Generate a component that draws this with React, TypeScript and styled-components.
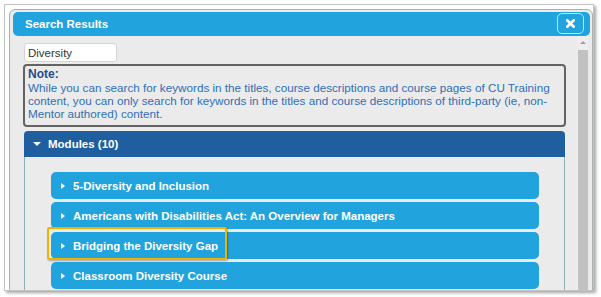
import React from "react";
import styled, { createGlobalStyle } from "styled-components";

const Global = createGlobalStyle`
  html, body { margin: 0; padding: 0; background: #ffffff; }
  body { font-family: "Liberation Sans", Arial, sans-serif; }
  * { box-sizing: border-box; }
`;

const Page = styled.div`
  width: 601px;
  height: 297px;
  padding: 4px 0 0 4px;
  background: #ffffff;
`;

const Frame = styled.div`
  width: 590px;
  height: 287px;
  border: 1px solid #c4c4c4;
  box-shadow: 2px 2px 3px rgba(0, 0, 0, 0.35);
  background: #ffffff;
  overflow: hidden;
  padding: 4px 0 0 4px;
`;

const Dialog = styled.div`
  width: 584px;
  height: 300px;
  border: 1px solid #a8b0b0;
  border-radius: 6px;
  background: #ebebeb;
  padding: 2px 2px 0 3px;
  display: flex;
  flex-direction: column;
`;

const TitleBar = styled.div`
  height: 24px;
  background: #21a4dd;
  border-radius: 5px;
  display: flex;
  align-items: flex-start;
  justify-content: space-between;
  padding: 0 6px 0 12px;
  flex-shrink: 0;
`;

const Title = styled.span`
  color: #ffffff;
  font-weight: bold;
  font-size: 11.5px;
  line-height: 24px;
`;

const CloseButton = styled.button`
  margin-top: 1px;
  width: 27px;
  height: 21px;
  border: 1px solid rgba(255, 255, 255, 0.7);
  border-radius: 5px;
  background: transparent;
  padding: 0;
  display: flex;
  align-items: center;
  justify-content: center;
`;

const Body = styled.div`
  flex: 1;
  display: flex;
  min-height: 0;
`;

const Content = styled.div`
  flex: 1;
  padding: 7px 11px 0 10px;
  display: flex;
  flex-direction: column;
`;

const SearchInput = styled.input`
  width: 93px;
  height: 19px;
  margin-left: 1px;
  border: 1px solid #d4d4d4;
  border-radius: 3px;
  background: #ffffff;
  font-family: "Liberation Sans", Arial, sans-serif;
  font-size: 11.5px;
  color: #333333;
  padding: 0 0 0 3px;
  outline: none;
`;

const Note = styled.div`
  margin-top: 2px;
  height: 63px;
  border: 2px solid #636363;
  border-radius: 4px;
  padding: 2px 3px 0;
  color: #2f6fb6;
  font-size: 11.7px;
  line-height: 13px;
  white-space: nowrap;
`;

const NoteLabel = styled.div`
  font-weight: bold;
  color: #1f4e8b;
  font-size: 12px;
`;

const ModulesHeader = styled.div`
  margin: 4px 1px 0 1px;
  height: 26px;
  background: #1f5f9f;
  border-radius: 4px 4px 0 0;
  display: flex;
  align-items: center;
  padding-left: 9px;
  gap: 7px;
  color: #ffffff;
  font-weight: bold;
  font-size: 11.5px;
  flex-shrink: 0;
`;

const DownCaret = styled.span`
  width: 0;
  height: 0;
  border-left: 4px solid transparent;
  border-right: 4px solid transparent;
  border-top: 4px solid #ffffff;
`;

const Panel = styled.div`
  margin: 0 1px;
  flex: 1;
  border-left: 1px solid #8fb2b4;
  border-right: 1px solid #8fb2b4;
  padding: 15px 25px 0 26px;
  display: flex;
  flex-direction: column;
  gap: 3px;
`;

const Item = styled.div`
  position: relative;
  height: 27px;
  background: #21a4dd;
  border-radius: 5px;
  display: flex;
  align-items: center;
  padding-left: 10px;
  gap: 8px;
  color: #ffffff;
  font-weight: bold;
  font-size: 11.5px;
  flex-shrink: 0;
`;

const RightCaret = styled.span`
  width: 0;
  height: 0;
  border-top: 3.5px solid transparent;
  border-bottom: 3.5px solid transparent;
  border-left: 4px solid #ffffff;
`;

const Highlight = styled.span`
  position: absolute;
  left: -4px;
  top: -5px;
  width: 180px;
  height: 33px;
  border: 2px solid #f2b200;
  border-radius: 2px;
  box-shadow: 1px 1px 2px rgba(0, 0, 0, 0.3);
  pointer-events: none;
`;

const Scrollbar = styled.div`
  width: 11px;
  margin-right: 2px;
  background: #eeeeee;
  display: flex;
  flex-direction: column;
  align-items: center;
  padding-top: 5px;
`;

const UpArrow = styled.span`
  width: 0;
  height: 0;
  border-left: 3px solid transparent;
  border-right: 3px solid transparent;
  border-bottom: 3px solid #a0a0a0;
`;

const Thumb = styled.div`
  margin-top: 6px;
  width: 10px;
  flex: 1;
  background: #c1c1c1;
`;

const items = [
  "5-Diversity and Inclusion",
  "Americans with Disabilities Act: An Overview for Managers",
  "Bridging the Diversity Gap",
  "Classroom Diversity Course",
];

export default function App() {
  return (
    <>
      <Global />
      <Page>
        <Frame>
          <Dialog>
            <TitleBar>
              <Title>Search Results</Title>
              <CloseButton aria-label="Close">
                <svg width="9" height="9" viewBox="0 0 10 10">
                  <path d="M1.5 1.5 L8.5 8.5 M8.5 1.5 L1.5 8.5" stroke="#ffffff" strokeWidth="3" strokeLinecap="square" />
                </svg>
              </CloseButton>
            </TitleBar>
            <Body>
              <Content>
                <SearchInput defaultValue="Diversity" />
                <Note>
                  <NoteLabel>Note:</NoteLabel>
                  While you can search for keywords in the titles, course descriptions and course pages of CU Training
                  <br />
                  content, you can only search for keywords in the titles and course descriptions of third-party (ie, non-
                  <br />
                  Mentor authored) content.
                </Note>
                <ModulesHeader>
                  <DownCaret />
                  Modules (10)
                </ModulesHeader>
                <Panel>
                  {items.map((t, i) => (
                    <Item key={t}>
                      <RightCaret />
                      {t}
                      {i === 2 && <Highlight />}
                    </Item>
                  ))}
                </Panel>
              </Content>
              <Scrollbar>
                <UpArrow />
                <Thumb />
              </Scrollbar>
            </Body>
          </Dialog>
        </Frame>
      </Page>
    </>
  );
}
